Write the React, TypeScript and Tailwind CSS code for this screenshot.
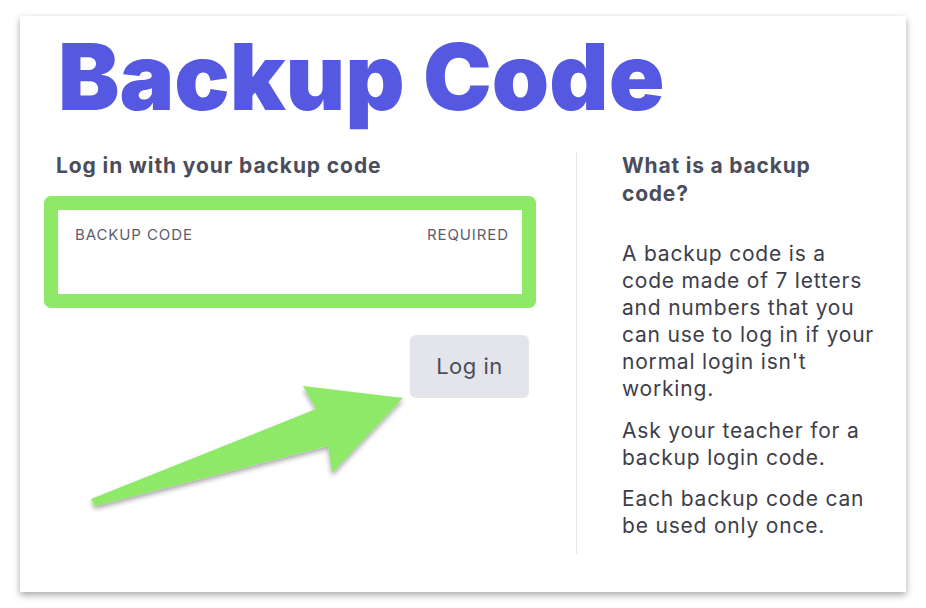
import React from 'react';

function Arrow() {
    return (
        <svg className="absolute left-0 top-0" width="926" height="608" viewBox="0 0 926 608">
            <defs>
                <filter id="arrowShadow" x="-10%" y="-10%" width="120%" height="130%">
                    <feDropShadow dx="0" dy="3" stdDeviation="2.5" floodColor="#000" floodOpacity="0.35" />
                </filter>
            </defs>
            <polygon
                points="403,398 303,386 316,409 91,499 95,506 328,446 332,473"
                fill="#8fe968"
                filter="url(#arrowShadow)"
            />
        </svg>
    );
}

export default function App() {
    return (
        <div className="relative w-[926px] h-[608px] bg-white overflow-hidden font-['Inter',sans-serif]">
            {/* Card */}
            <div className="absolute left-[20px] top-[16px] w-[886px] h-[576px] bg-white shadow-[0_3px_7px_rgba(0,0,0,0.35)]">
                <div className="pl-[38px] pt-[10px]">
                    <h1 className="text-[92px] leading-[1.1] font-black text-[#5559e2]">Backup Code</h1>
                </div>

                <div className="flex mt-[25px]">
                    {/* Left column */}
                    <div className="w-[556px] pl-[24px] pr-[40px]">
                        <p className="ml-[12px] text-[21px] font-bold text-[#4b4c5c] leading-[28px] tracking-[0.9px]">Log in with your backup code</p>
                        <div className="mt-[16px] h-[112px] rounded-[7px] border-[14px] border-[#8fe968] bg-white pl-[17px] pr-[13px] pt-[15px]">
                            <div className="flex justify-between text-[15px] text-[#5d5e6c] uppercase leading-[20px] tracking-[0.9px]">
                                <span>Backup Code</span>
                                <span>Required</span>
                            </div>
                        </div>
                        <div className="flex justify-end mt-[27px] pr-[7px]">
                            <button className="w-[119px] h-[63px] rounded-[6px] bg-[#e4e5ea] text-[22px] text-[#4b4c5c] tracking-[0.5px]">Log in</button>
                        </div>
                    </div>

                    {/* Divider */}
                    <div className="w-px h-[402px] bg-[#e6e6ea]" />

                    {/* Right column */}
                    <div className="pl-[45px] w-[300px] text-[#3d3e4a]">
                        <div className="w-[254px]">
                            <h2 className="text-[21px] font-bold text-[#4b4c5c] leading-[28px] tracking-[0.8px]">What is a backup code?</h2>
                            <p className="mt-[32px] text-[21px] leading-[27px] tracking-[0.8px]">
                                A backup code is a code made of 7 letters and numbers that you can use to log in if your normal login isn't working.
                            </p>
                            <p className="mt-[15px] text-[21px] leading-[27px] tracking-[0.8px]">Ask your teacher for a backup login code.</p>
                            <p className="mt-[14px] text-[21px] leading-[27px] tracking-[0.8px]">Each backup code can be used only once.</p>
                        </div>
                    </div>
                </div>
            </div>
            <Arrow />
        </div>
    );
}
